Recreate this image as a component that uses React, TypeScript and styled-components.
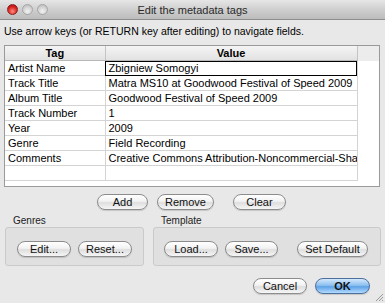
import React from "react";
import styled, { createGlobalStyle, css } from "styled-components";

const GlobalStyle = createGlobalStyle`
  html, body {
    margin: 0;
    padding: 0;
    background: #e8e8e8;
  }
  body {
    font-family: "Liberation Sans", Arial, sans-serif;
    color: #000;
  }
`;

/* ─ window chrome ─ */
const Window = styled.div`
  width: 385px;
  height: 303px;
  display: flex;
  flex-direction: column;
  background: #e8e8e8;
  overflow: hidden;
  position: relative;
`;

const TitleBar = styled.div`
  height: 20px;
  flex: none;
  display: flex;
  align-items: center;
  position: relative;
  background: linear-gradient(#e6e6e6, #cfcfcf 50%, #bcbcbc);
  border-bottom: 1px solid #8e8e8e;
  box-sizing: border-box;
`;

const Lights = styled.div`
  display: flex;
  gap: 4px;
  padding-left: 7px;
`;

const Light = styled.span<{ $red?: boolean }>`
  width: 11px;
  height: 11px;
  border-radius: 50%;
  box-sizing: border-box;
  ${(p) =>
    p.$red
      ? css`
          background: radial-gradient(circle at 50% 70%, #ff8a80, #d6201a 60%, #9a1010);
          border: 1px solid #8a2020;
        `
      : css`
          background: radial-gradient(circle at 50% 70%, #f2f2f2, #d0d0d0 60%, #b2b2b2);
          border: 1px solid #a6a6a6;
        `}
`;

const Title = styled.div`
  position: absolute;
  left: 0;
  right: 0;
  text-align: center;
  font-size: 11px;
  color: #2a2a2a;
  pointer-events: none;
`;

const Hint = styled.div`
  font-size: 10.5px;
  padding: 5px 0 0 4px;
  height: 16px;
  flex: none;
`;

/* ─ table ─ */
const TableFrame = styled.div`
  margin: 4px 5px 0 4px;
  height: 142px;
  flex: none;
  background: #fff;
  border: 1px solid #9a9a9a;
  box-sizing: border-box;
  overflow: hidden;
`;

const Grid = styled.table`
  border-collapse: collapse;
  table-layout: fixed;
  width: 100%;
  font-size: 11px;
`;

const Head = styled.th`
  height: 14px;
  padding: 0;
  background: linear-gradient(#f4f4f4, #e2e2e2);
  border-bottom: 1px solid #b8b8b8;
  border-right: 1px solid #c4c4c4;
  font-weight: bold;
  font-size: 11px;
  text-align: center;
  &:last-child {
    border-right: none;
    background: #ececec;
    border-bottom: none;
  }
`;

const Cell = styled.td<{ $editing?: boolean }>`
  height: 14px;
  padding: 0 0 0 3px;
  border-bottom: 1px solid #d4d4d4;
  border-right: 1px solid #d4d4d4;
  white-space: nowrap;
  overflow: hidden;
  ${(p) =>
    p.$editing &&
    css`
      outline: 1px solid #000;
      outline-offset: -1px;
    `}
`;

const Spare = styled.td`
  padding: 0;
  border: none;
`;

/* ─ buttons ─ */
const Btn = styled.button<{ $w: number; $primary?: boolean }>`
  width: ${(p) => p.$w}px;
  height: 16px;
  padding: 0;
  border-radius: 8px;
  font-family: inherit;
  font-size: 11px;
  line-height: 14px;
  color: #111;
  border: 1px solid #8c8c8c;
  background: linear-gradient(#ffffff, #f2f2f2 45%, #dedede 55%, #f6f6f6);
  box-shadow: 0 1px 1px rgba(0, 0, 0, 0.15);
  ${(p) =>
    p.$primary &&
    css`
      border-color: #4d6f9e;
      background: linear-gradient(#d4e8fb, #8ec0f0 45%, #5fa2e6 55%, #b2dbff);
      font-weight: bold;
    `}
`;

const ActionRow = styled.div`
  display: flex;
  padding: 7px 0 0 97px;
  gap: 9px;
  & > :last-child {
    margin-left: 10px;
  }
`;

const Groups = styled.div`
  display: grid;
  grid-template-columns: 139px 228px;
  column-gap: 9px;
  padding: 5px 0 0 5px;
`;

const Group = styled.div``;

const GroupLabel = styled.div`
  font-size: 10px;
  height: 12px;
  padding-left: 8px;
  color: #222;
`;

const GroupBox = styled.div<{ $pad: number }>`
  height: 39px;
  box-sizing: border-box;
  background: #e0e0e0;
  border: 1px solid #cacaca;
  border-radius: 3px;
  display: flex;
  align-items: flex-start;
  padding: 13px 0 0 ${(p) => p.$pad}px;
  gap: 7px;
`;

const Footer = styled.div`
  display: flex;
  justify-content: flex-end;
  gap: 8px;
  padding: 12px 15px 0 0;
`;

const Grip = styled.svg`
  position: absolute;
  right: 1px;
  bottom: 1px;
`;

const rows: [string, string][] = [
  ["Artist Name", "Zbigniew Somogyi"],
  ["Track Title", "Matra MS10 at Goodwood Festival of Speed 2009"],
  ["Album Title", "Goodwood Festival of Speed 2009"],
  ["Track Number", "1"],
  ["Year", "2009"],
  ["Genre", "Field Recording"],
  ["Comments", "Creative Commons Attribution-Noncommercial-Sha"],
  ["", ""],
];

const App: React.FC = () => {
  return (
    <Window>
      <GlobalStyle />
      <TitleBar>
        <Lights>
          <Light $red />
          <Light />
          <Light />
        </Lights>
        <Title>Edit the metadata tags</Title>
      </TitleBar>

      <Hint>Use arrow keys (or RETURN key after editing) to navigate fields.</Hint>

      <TableFrame>
        <Grid>
          <colgroup>
            <col style={{ width: 100 }} />
            <col style={{ width: 252 }} />
            <col />
          </colgroup>
          <thead>
            <tr>
              <Head>Tag</Head>
              <Head>Value</Head>
              <Head />
            </tr>
          </thead>
          <tbody>
            {rows.map(([tag, value], i) => (
              <tr key={i}>
                <Cell>{tag}</Cell>
                <Cell $editing={i === 0}>{value}</Cell>
                <Spare />
              </tr>
            ))}
          </tbody>
        </Grid>
      </TableFrame>

      <ActionRow>
        <Btn $w={51}>Add</Btn>
        <Btn $w={57}>Remove</Btn>
        <Btn $w={53}>Clear</Btn>
      </ActionRow>

      <Groups>
        <Group>
          <GroupLabel>Genres</GroupLabel>
          <GroupBox $pad={11}>
            <Btn $w={54}>Edit...</Btn>
            <Btn $w={54}>Reset...</Btn>
          </GroupBox>
        </Group>
        <Group>
          <GroupLabel>Template</GroupLabel>
          <GroupBox $pad={10}>
            <Btn $w={54}>Load...</Btn>
            <Btn $w={53}>Save...</Btn>
            <Btn $w={71} style={{ marginLeft: 12 }}>
              Set Default
            </Btn>
          </GroupBox>
        </Group>
      </Groups>

      <Footer>
        <Btn $w={54}>Cancel</Btn>
        <Btn $w={55} $primary>
          OK
        </Btn>
      </Footer>

      <Grip width="11" height="11" viewBox="0 0 11 11">
        <path d="M10 3 L3 10 M10 6 L6 10 M10 9 L9 10" stroke="#9a9a9a" strokeWidth="1" />
      </Grip>
    </Window>
  );
};

export default App;
